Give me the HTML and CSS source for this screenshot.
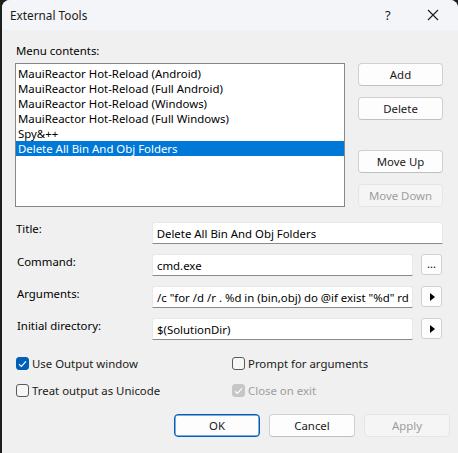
FILE: index.html
```html
<!DOCTYPE html>
<html>
<head>
<meta charset="utf-8">
<link rel="stylesheet" href="styles.css">
</head>
<body>
<div class="window">
  <div class="titlebar">
    <span class="title">External Tools</span>
    <span class="help">?</span>
    <span class="close">
      <svg width="12" height="12" viewBox="0 0 12 12"><path d="M1 1 L11 11 M11 1 L1 11" stroke="#1a1a1a" stroke-width="1.1" fill="none"/></svg>
    </span>
  </div>
  <div class="content">
    <div class="menu-label">Menu contents:</div>
    <div class="top-row">
      <div class="listbox">
        <div class="item">MauiReactor Hot-Reload (Android)</div>
        <div class="item">MauiReactor Hot-Reload (Full Android)</div>
        <div class="item">MauiReactor Hot-Reload (Windows)</div>
        <div class="item">MauiReactor Hot-Reload (Full Windows)</div>
        <div class="item">Spy&amp;++</div>
        <div class="item selected">Delete All Bin And Obj Folders</div>
      </div>
      <div class="side">
        <div class="btn">Add</div>
        <div class="btn">Delete</div>
        <div class="btn gap-top">Move Up</div>
        <div class="btn disabled">Move Down</div>
      </div>
    </div>
    <div class="fields">
      <div class="row">
        <div class="lbl">Title:</div>
        <div class="input wide">Delete All Bin And Obj Folders</div>
      </div>
      <div class="row">
        <div class="lbl">Command:</div>
        <div class="input">cmd.exe</div>
        <div class="mini">...</div>
      </div>
      <div class="row">
        <div class="lbl">Arguments:</div>
        <div class="input">/c "for /d /r . %d in (bin,obj) do @if exist "%d" rd /s /q "%d""</div>
        <div class="mini"><span class="tri"></span></div>
      </div>
      <div class="row">
        <div class="lbl">Initial directory:</div>
        <div class="input">$(SolutionDir)</div>
        <div class="mini"><span class="tri"></span></div>
      </div>
    </div>
    <div class="checks">
      <div class="check"><span class="box checked"><svg width="9" height="8" viewBox="0 0 9 8"><path d="M1 4.2 L3.4 6.4 L8 1.4" stroke="#fff" stroke-width="1.2" fill="none"/></svg></span>Use Output window</div>
      <div class="check"><span class="box"></span>Prompt for arguments</div>
      <div class="check"><span class="box"></span>Treat output as Unicode</div>
      <div class="check dim"><span class="box checked grey"><svg width="9" height="8" viewBox="0 0 9 8"><path d="M1 4.2 L3.4 6.4 L8 1.4" stroke="#fff" stroke-width="1.2" fill="none"/></svg></span>Close on exit</div>
    </div>
    <div class="footer">
      <div class="btn fbtn default">OK</div>
      <div class="btn fbtn">Cancel</div>
      <div class="btn fbtn disabled">Apply</div>
    </div>
  </div>
</div>
</body>
</html>
```
FILE: styles.css
```css
html, body {
  margin: 0;
  padding: 0;
  background: #1e1e1e;
  overflow: hidden;
}
body {
  width: 458px;
  height: 453px;
  font-family: "Segoe UI", "Noto Sans", sans-serif;
  font-size: 11.4px;
  color: #000;
}
.window {
  margin-left: 2px;
  width: 456px;
  height: 460px;
  border-radius: 8px;
  background: #f0f0f0;
  overflow: hidden;
}
.titlebar {
  height: 30px;
  background: #f4f5f8;
  display: flex;
  align-items: center;
  padding-left: 8px;
}
.title {
  flex: 1;
  color: #1a1a1a;
  font-size: 11.8px;
}
.help {
  width: 20px;
  margin-right: 22px;
  color: #1a1a1a;
  font-size: 13px;
}
.close {
  width: 12px;
  height: 12px;
  margin-right: 19px;
  display: flex;
}
.content {
  padding: 13px 15px 0 13px;
}
.menu-label {
  line-height: 15px;
  height: 15px;
  padding-left: 1px;
}
.top-row {
  display: flex;
  margin-top: 5px;
  justify-content: space-between;
}
.listbox {
  width: 328px;
  height: 140px;
  border: 1px solid #828790;
  background: #fff;
  padding-top: 2px;
  box-sizing: content-box;
}
.item {
  height: 15px;
  line-height: 15px;
  padding-left: 2px;
  white-space: nowrap;
  overflow: hidden;
}
.item.selected {
  background: #0078d7;
  color: #fff;
}
.side {
  width: 85px;
  display: flex;
  flex-direction: column;
  gap: 11px;
}
.btn {
  height: 21px;
  border: 1px solid #d0d0d0;
  border-bottom-color: #c0c0c0;
  border-radius: 4px;
  background: #fdfdfd;
  display: flex;
  align-items: center;
  justify-content: center;
  color: #1a1a1a;
}
.btn.gap-top {
  margin-top: 19px;
}
.btn.disabled {
  background: #f5f5f5;
  border-color: #e5e5e5;
  color: #9d9d9d;
}
.fields {
  margin-top: 14px;
  display: flex;
  flex-direction: column;
  gap: 9px;
}
.row {
  display: flex;
  align-items: flex-start;
  height: 23px;
}
.lbl {
  width: 137px;
  line-height: 15px;
  padding-left: 2px;
  padding-top: 1px;
  box-sizing: border-box;
}
.row:first-child .lbl {
  padding-left: 1px;
  padding-top: 0;
}
.input {
  width: 261px;
  height: 22px;
  box-sizing: border-box;
  background: #fff;
  border: 1px solid #e8e8e8;
  border-bottom: 1px solid #8a8a8a;
  border-radius: 3px 3px 0 0;
  padding: 0 4px;
  line-height: 21px;
  white-space: nowrap;
  overflow: hidden;
  margin-top: 1px;
}
.input.wide {
  width: 292px;
}
.mini {
  width: 21px;
  height: 21px;
  margin-left: 8px;
  margin-top: 1px;
  box-sizing: border-box;
  border: 1px solid #d0d0d0;
  border-radius: 3px;
  background: #fdfdfd;
  display: flex;
  align-items: center;
  justify-content: center;
  font-size: 11px;
  line-height: 1;
  padding-bottom: 3px;
}
.tri {
  width: 0;
  height: 0;
  border-top: 4px solid transparent;
  border-bottom: 4px solid transparent;
  border-left: 5px solid #000;
  margin-top: 3px;
  margin-left: 1px;
}
.checks {
  margin-top: 16px;
  display: grid;
  grid-template-columns: 216px 1fr;
  row-gap: 12px;
}
.check {
  display: flex;
  align-items: center;
  height: 15px;
  line-height: 15px;
  color: #1a1a1a;
}
.check.dim {
  color: #9d9d9d;
}
.box {
  width: 13px;
  height: 13px;
  box-sizing: border-box;
  border: 1px solid #5a5a5a;
  border-radius: 3px;
  background: #f7f7f7;
  margin-left: 1px;
  margin-right: 3px;
  display: flex;
  align-items: center;
  justify-content: center;
}
.box.checked {
  background: #005fb8;
  border-color: #005fb8;
}
.box.checked.grey {
  background: #c6c6c6;
  border-color: #c6c6c6;
}
.footer {
  margin-top: 16px;
  margin-right: -7px;
  display: flex;
  justify-content: flex-end;
  gap: 9px;
}
.fbtn {
  width: 84px;
}
.fbtn.default {
  border-color: #005fb8;
  box-shadow: inset 0 0 0 0.5px #005fb8;
}
```
